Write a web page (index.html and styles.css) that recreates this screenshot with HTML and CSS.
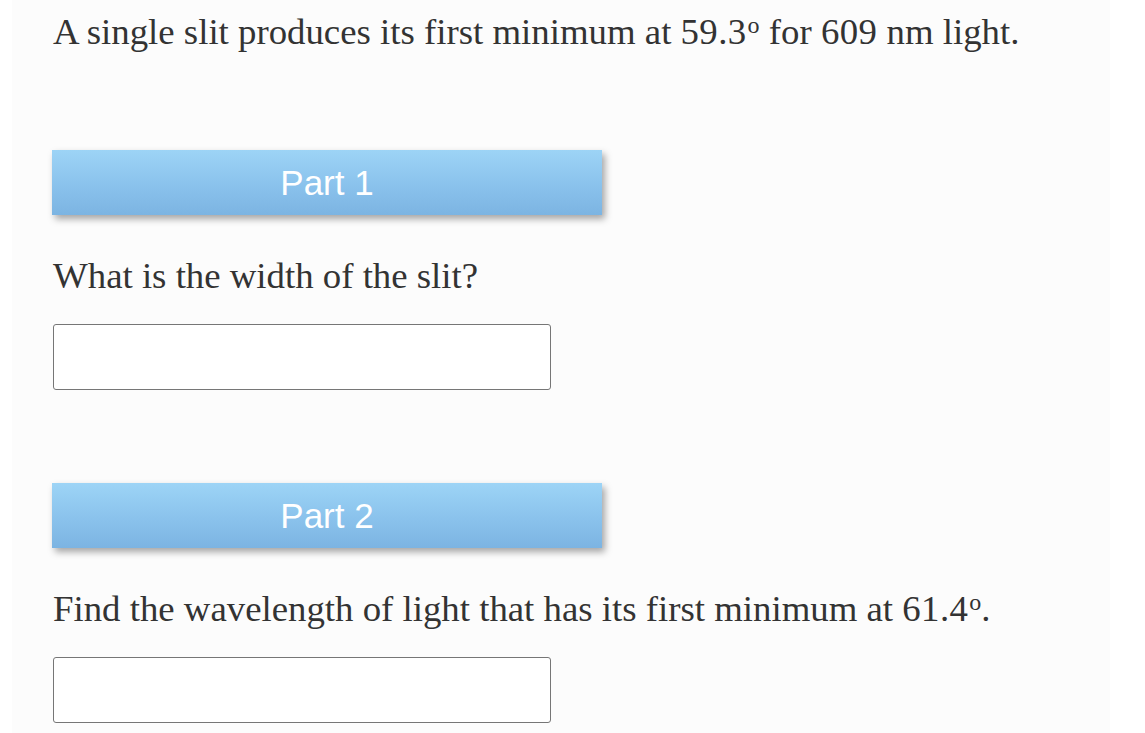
FILE: index.html
```html
<!DOCTYPE html>
<html>
<head>
<meta charset="utf-8">
<link rel="stylesheet" href="styles.css">
</head>
<body>
<div class="panel">
  <p class="text intro">A single slit produces its first minimum at <span class="num">59.3<sup class="deg">o</sup></span> for <span class="num">609</span> nm light.</p>
  <section class="part part-1">
    <div class="part-bar">Part 1</div>
    <p class="text question">What is the width of the slit?</p>
    <input class="answer" type="text">
  </section>
  <section class="part part-2">
    <div class="part-bar">Part 2</div>
    <p class="text question">Find the wavelength of light that has its first minimum at <span class="num">61.4<sup class="deg">o</sup></span>.</p>
    <input class="answer" type="text">
  </section>
</div>
</body>
</html>
```
FILE: styles.css
```css
html, body {
  margin: 0;
  padding: 0;
  background: #ffffff;
}
body {
  width: 1145px;
  height: 733px;
  overflow: hidden;
}
.panel {
  margin-left: 12px;
  width: 1057px;
  min-height: 733px;
  background: #fcfcfc;
  padding: 12px 0 0 41px;
  box-sizing: content-box;
}
.text {
  margin: 0;
  font-family: "Liberation Serif", "Times New Roman", serif;
  font-size: 36.8px;
  line-height: 40px;
  color: #333333;
}
.num {
  font-family: "Liberation Serif", "Times New Roman", serif;
  letter-spacing: 0.4px;
}
.deg {
  font-size: 24px;
  line-height: 0;
  vertical-align: 11px;
  letter-spacing: 0;
  margin-left: 1px;
}
.part {
  display: flex;
  flex-direction: column;
  align-items: flex-start;
}
.part-1 {
  margin-top: 98px;
}
.part-2 {
  margin-top: 93px;
}
.part-bar {
  margin-left: -1px;
  width: 550px;
  height: 65px;
  display: flex;
  align-items: center;
  justify-content: center;
  background: linear-gradient(to bottom, #9dd4f6 0%, #8ac2ec 55%, #7cb4e2 100%);
  box-shadow: 3px 4px 7px rgba(0, 0, 0, 0.35);
  color: #ffffff;
  font-family: "Liberation Sans", Arial, sans-serif;
  font-size: 35px;
}
.question {
  margin-top: 41px;
}
.answer {
  margin: 28px 0 0 0;
  width: 498px;
  height: 66px;
  box-sizing: border-box;
  border: 1px solid #767676;
  border-radius: 3px;
  background: #ffffff;
  padding: 0 8px;
  font-size: 24px;
}
```
